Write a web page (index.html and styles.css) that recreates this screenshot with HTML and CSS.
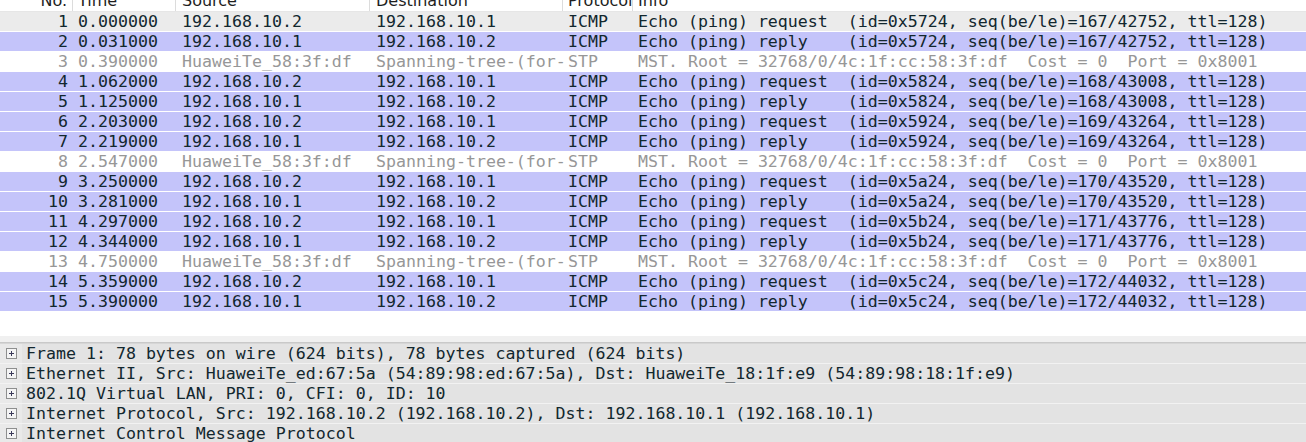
FILE: index.html
```html
<!DOCTYPE html>
<html>
<head>
<meta charset="utf-8">
<link rel="stylesheet" href="styles.css">
</head>
<body>
<div class="app">
  <div class="list">
    <div class="hdr">
      <div class="hc c-no">No.</div>
      <div class="hc c-time">Time</div>
      <div class="hc c-src">Source</div>
      <div class="hc c-dst">Destination</div>
      <div class="hc c-proto">Protocol</div>
      <div class="hc c-info">Info</div>
    </div>
    <div class="row sel"><div class="c c-no">1</div><div class="c c-time">0.000000</div><div class="c c-src">192.168.10.2</div><div class="c c-dst">192.168.10.1</div><div class="c c-proto">ICMP</div><div class="c c-info">Echo (ping) request  (id=0x5724, seq(be/le)=167/42752, ttl=128)</div></div>
    <div class="row icmp"><div class="c c-no">2</div><div class="c c-time">0.031000</div><div class="c c-src">192.168.10.1</div><div class="c c-dst">192.168.10.2</div><div class="c c-proto">ICMP</div><div class="c c-info">Echo (ping) reply    (id=0x5724, seq(be/le)=167/42752, ttl=128)</div></div>
    <div class="row stp"><div class="c c-no">3</div><div class="c c-time">0.390000</div><div class="c c-src">HuaweiTe_58:3f:df</div><div class="c c-dst">Spanning-tree-(for-</div><div class="c c-proto">STP</div><div class="c c-info">MST. Root = 32768/0/4c:1f:cc:58:3f:df  Cost = 0  Port = 0x8001</div></div>
    <div class="row icmp"><div class="c c-no">4</div><div class="c c-time">1.062000</div><div class="c c-src">192.168.10.2</div><div class="c c-dst">192.168.10.1</div><div class="c c-proto">ICMP</div><div class="c c-info">Echo (ping) request  (id=0x5824, seq(be/le)=168/43008, ttl=128)</div></div>
    <div class="row icmp"><div class="c c-no">5</div><div class="c c-time">1.125000</div><div class="c c-src">192.168.10.1</div><div class="c c-dst">192.168.10.2</div><div class="c c-proto">ICMP</div><div class="c c-info">Echo (ping) reply    (id=0x5824, seq(be/le)=168/43008, ttl=128)</div></div>
    <div class="row icmp"><div class="c c-no">6</div><div class="c c-time">2.203000</div><div class="c c-src">192.168.10.2</div><div class="c c-dst">192.168.10.1</div><div class="c c-proto">ICMP</div><div class="c c-info">Echo (ping) request  (id=0x5924, seq(be/le)=169/43264, ttl=128)</div></div>
    <div class="row icmp"><div class="c c-no">7</div><div class="c c-time">2.219000</div><div class="c c-src">192.168.10.1</div><div class="c c-dst">192.168.10.2</div><div class="c c-proto">ICMP</div><div class="c c-info">Echo (ping) reply    (id=0x5924, seq(be/le)=169/43264, ttl=128)</div></div>
    <div class="row stp"><div class="c c-no">8</div><div class="c c-time">2.547000</div><div class="c c-src">HuaweiTe_58:3f:df</div><div class="c c-dst">Spanning-tree-(for-</div><div class="c c-proto">STP</div><div class="c c-info">MST. Root = 32768/0/4c:1f:cc:58:3f:df  Cost = 0  Port = 0x8001</div></div>
    <div class="row icmp"><div class="c c-no">9</div><div class="c c-time">3.250000</div><div class="c c-src">192.168.10.2</div><div class="c c-dst">192.168.10.1</div><div class="c c-proto">ICMP</div><div class="c c-info">Echo (ping) request  (id=0x5a24, seq(be/le)=170/43520, ttl=128)</div></div>
    <div class="row icmp"><div class="c c-no">10</div><div class="c c-time">3.281000</div><div class="c c-src">192.168.10.1</div><div class="c c-dst">192.168.10.2</div><div class="c c-proto">ICMP</div><div class="c c-info">Echo (ping) reply    (id=0x5a24, seq(be/le)=170/43520, ttl=128)</div></div>
    <div class="row icmp"><div class="c c-no">11</div><div class="c c-time">4.297000</div><div class="c c-src">192.168.10.2</div><div class="c c-dst">192.168.10.1</div><div class="c c-proto">ICMP</div><div class="c c-info">Echo (ping) request  (id=0x5b24, seq(be/le)=171/43776, ttl=128)</div></div>
    <div class="row icmp"><div class="c c-no">12</div><div class="c c-time">4.344000</div><div class="c c-src">192.168.10.1</div><div class="c c-dst">192.168.10.2</div><div class="c c-proto">ICMP</div><div class="c c-info">Echo (ping) reply    (id=0x5b24, seq(be/le)=171/43776, ttl=128)</div></div>
    <div class="row stp"><div class="c c-no">13</div><div class="c c-time">4.750000</div><div class="c c-src">HuaweiTe_58:3f:df</div><div class="c c-dst">Spanning-tree-(for-</div><div class="c c-proto">STP</div><div class="c c-info">MST. Root = 32768/0/4c:1f:cc:58:3f:df  Cost = 0  Port = 0x8001</div></div>
    <div class="row icmp"><div class="c c-no">14</div><div class="c c-time">5.359000</div><div class="c c-src">192.168.10.2</div><div class="c c-dst">192.168.10.1</div><div class="c c-proto">ICMP</div><div class="c c-info">Echo (ping) request  (id=0x5c24, seq(be/le)=172/44032, ttl=128)</div></div>
    <div class="row icmp"><div class="c c-no">15</div><div class="c c-time">5.390000</div><div class="c c-src">192.168.10.1</div><div class="c c-dst">192.168.10.2</div><div class="c c-proto">ICMP</div><div class="c c-info">Echo (ping) reply    (id=0x5c24, seq(be/le)=172/44032, ttl=128)</div></div>
  </div>
  <div class="splitter"></div>
  <div class="details">
    <div class="drow"><span class="exp"><svg width="11" height="11" viewBox="0 0 11 11"><rect x="0.5" y="0.5" width="10" height="10" fill="#f4f4f4" stroke="#8e8f8f"/><path d="M3 5.5h5M5.5 3v5" stroke="#3a3a5a" stroke-width="1"/></svg></span><span class="dt">Frame 1: 78 bytes on wire (624 bits), 78 bytes captured (624 bits)</span></div>
    <div class="drow"><span class="exp"><svg width="11" height="11" viewBox="0 0 11 11"><rect x="0.5" y="0.5" width="10" height="10" fill="#f4f4f4" stroke="#8e8f8f"/><path d="M3 5.5h5M5.5 3v5" stroke="#3a3a5a" stroke-width="1"/></svg></span><span class="dt">Ethernet II, Src: HuaweiTe_ed:67:5a (54:89:98:ed:67:5a), Dst: HuaweiTe_18:1f:e9 (54:89:98:18:1f:e9)</span></div>
    <div class="drow"><span class="exp"><svg width="11" height="11" viewBox="0 0 11 11"><rect x="0.5" y="0.5" width="10" height="10" fill="#f4f4f4" stroke="#8e8f8f"/><path d="M3 5.5h5M5.5 3v5" stroke="#3a3a5a" stroke-width="1"/></svg></span><span class="dt">802.1Q Virtual LAN, PRI: 0, CFI: 0, ID: 10</span></div>
    <div class="drow"><span class="exp"><svg width="11" height="11" viewBox="0 0 11 11"><rect x="0.5" y="0.5" width="10" height="10" fill="#f4f4f4" stroke="#8e8f8f"/><path d="M3 5.5h5M5.5 3v5" stroke="#3a3a5a" stroke-width="1"/></svg></span><span class="dt">Internet Protocol, Src: 192.168.10.2 (192.168.10.2), Dst: 192.168.10.1 (192.168.10.1)</span></div>
    <div class="drow"><span class="exp"><svg width="11" height="11" viewBox="0 0 11 11"><rect x="0.5" y="0.5" width="10" height="10" fill="#f4f4f4" stroke="#8e8f8f"/><path d="M3 5.5h5M5.5 3v5" stroke="#3a3a5a" stroke-width="1"/></svg></span><span class="dt">Internet Control Message Protocol</span></div>
  </div>
</div>
</body>
</html>
```
FILE: styles.css
```css
html, body {
  margin: 0;
  padding: 0;
  background: #ffffff;
}
.app {
  width: 1306px;
  height: 442px;
  overflow: hidden;
  font-family: "DejaVu Sans Mono", "Liberation Mono", monospace;
  font-size: 16.6px;
  color: #12272e;
}
.list {
  height: 336px;
  background: #ffffff;
}
.hdr {
  display: grid;
  grid-template-columns: 73px 103px 194px 193px 70px 1fr;
  height: 11px;
  overflow: hidden;
  border-bottom: 1px solid #e6e6e6;
  background: #ffffff;
}
.hc {
  font-family: "DejaVu Sans", Verdana, sans-serif;
  font-size: 16px;
  line-height: 16px;
  margin-top: -7px;
  color: #1e1e1e;
  padding-left: 5px;
  border-right: 1px solid #dcdcdc;
  white-space: nowrap;
  overflow: hidden;
}
.hdr .c-no { padding-left: 3px; }
.hdr .c-info { border-right: none; }
.row {
  display: grid;
  grid-template-columns: 73px 103px 194px 193px 70px 1fr;
  height: 19px;
  border-bottom: 1px solid #ffffff;
  line-height: 19px;
  white-space: pre;
}
.row.sel { background: #ebebeb; }
.row.icmp { background: #c4c4fa; }
.row.stp { background: #ffffff; color: #979797; }
.c {
  padding-left: 5px;
  overflow: visible;
}
.c-no {
  text-align: right;
  padding-left: 0;
  padding-right: 5px;
}
.c-src, .c-dst { padding-left: 6px; }
.splitter {
  height: 6px;
  background: #f0f0f0;
  border-bottom: 1px solid #c9c9c9;
}
.details {
  background: #e3e3e3;
  padding-top: 0;
}
.drow {
  display: flex;
  align-items: center;
  height: 19px;
  border-bottom: 1px solid #f2f2f2;
  white-space: pre;
}
.drow:first-child {
  border-top: 1px solid #d6d6d6;
}
.exp {
  width: 22px;
  height: 19px;
  display: flex;
  align-items: center;
  justify-content: center;
  padding-left: 1px;
  box-sizing: border-box;
  background: #e9e9e9;
}
.exp svg { display: block; }
.dt {
  padding-left: 4px;
  line-height: 19px;
}
```
